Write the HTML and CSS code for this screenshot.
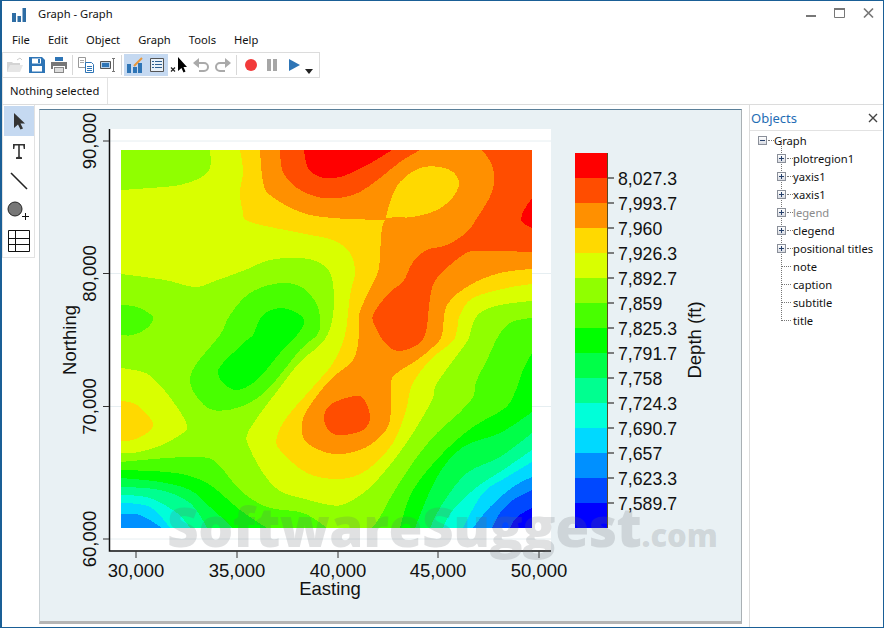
FILE: index.html
```html
<!DOCTYPE html>
<html lang="en">
<head>
<meta charset="utf-8">
<title>Graph - Graph</title>
<link rel="stylesheet" href="styles.css">
</head>
<body>
<div class="window">
  <header class="titlebar">
    <svg class="app-icon" width="14" height="14" viewBox="0 0 14 14"><path fill="#2e6da4" d="M0 5h4v9H0zM5.500 8h3.500v6H5.500zM10.500 0H14v14h-3.500z"/></svg>
    <span class="title-text">Graph - Graph</span>
    <div class="win-controls">
      <svg width="10" height="12" viewBox="0 0 10 12"><path fill="#777" d="M0 8h10v2H0z"/></svg>
      <svg width="11" height="12" viewBox="0 0 11 12"><path fill="none" stroke="#777" d="M.5 1.500h10v9H.500z"/><path fill="#777" d="M0 1h11v2H0z"/></svg>
      <svg width="11" height="12" viewBox="0 0 11 12"><path fill="none" stroke="#777" stroke-width="1.700" d="M1 1.500l9 9M10 1.500l-9 9"/></svg>
    </div>
  </header>
  <nav class="menubar">
    <span>File</span><span>Edit</span><span>Object</span><span>Graph</span><span>Tools</span><span>Help</span>
  </nav>
  <div class="toolbar">
    <span class="tb"><svg width="16" height="16" viewBox="0 0 16 16"><path fill="#d4d4d4" d="M0 5h5l1 1h7v9H0z"/><path fill="#e6e6e6" d="M3 8h13l-3 7H0z"/><path fill="none" stroke="#ccc" d="M10 3l3-2 2 2"/></svg></span>
    <span class="tb"><svg width="16" height="16" viewBox="0 0 16 16"><path fill="#2e75b6" d="M0 0h13l3 3v13H0z"/><path fill="#fff" d="M3 1.500h9v5H3zM3 9h10v5.500H3z"/><path fill="#2e75b6" d="M9 2h2v4H9z"/></svg></span>
    <span class="tb"><svg width="16" height="16" viewBox="0 0 16 16"><path fill="#2e75b6" d="M4 0h8v4H4z"/><path fill="#777" d="M0 5h16v7h-2V9H2v3H0z"/><path fill="#888" d="M3 10h10v6H3z"/><path fill="#ddd" d="M4 11h8v4H4z"/></svg></span>
    <i class="sep"></i>
    <span class="tb"><svg width="16" height="16" viewBox="0 0 16 16"><path fill="#fff" stroke="#999" d="M.5.500h7v10h-7z"/><path fill="#fff" stroke="#2e75b6" d="M7.500 5.500h6l2 2v8h-8z"/><path stroke="#2e75b6" d="M9 9.500h5M9 11.500h5M9 13.500h5"/><path stroke="#aaa" d="M2 3.500h4M2 5.500h4"/></svg></span>
    <span class="tb"><svg width="16" height="16" viewBox="0 0 16 16"><path fill="#b9d2ea" stroke="#555" d="M.5 4.500h10v7H.500z"/><path fill="#2e75b6" d="M2 6h7v4H2z"/><path fill="none" stroke="#777" d="M12 1.500h3M12 14.500h3M13.500 1.500v13"/></svg></span>
    <i class="sep"></i>
    <span class="tb active"><svg width="16" height="16" viewBox="0 0 16 16"><path fill="#2e75b6" d="M0 7h4v9H0zM6 10h4v6H6zM11 6h4v10h-4z"/><path stroke="#e8973a" stroke-width="2" d="M7 9l8-8"/></svg></span>
    <span class="tb active"><svg width="16" height="16" viewBox="0 0 16 16"><path fill="#e8f0f8" stroke="#555" d="M1.500 1.500h13v13h-13z"/><path stroke="#2e5f8f" d="M3 4.500h2M6 4.500h7M3 7.500h2M6 7.500h7M3 10.500h2M6 10.500h7"/></svg></span>
    <span class="tb cursor-cell"><svg width="22" height="18" viewBox="0 0 22 18"><path stroke="#222" stroke-width="1.200" d="M3 11.500l4 4M7 11.500l-4 4"/><path fill="#000" d="M10 1v14l3.500-3 2 4.500 2-1-2-4.500H19z"/></svg></span>
    <span class="tb"><svg width="16" height="16" viewBox="0 0 16 16"><path fill="none" stroke="#aaa" stroke-width="2" d="M3 6h8a4 4 0 0 1 0 8H6"/><path fill="#aaa" d="M0 6l6-5v10z"/></svg></span>
    <span class="tb"><svg width="16" height="16" viewBox="0 0 16 16"><path fill="none" stroke="#aaa" stroke-width="2" d="M13 6H5a4 4 0 0 0 0 8h5"/><path fill="#aaa" d="M16 6l-6-5v10z"/></svg></span>
    <i class="sep"></i>
    <span class="tb"><svg width="16" height="16" viewBox="0 0 16 16"><circle cx="9" cy="8" r="6" fill="#f23a3a"/></svg></span>
    <span class="tb"><svg width="16" height="16" viewBox="0 0 16 16"><path fill="#a6a6a6" d="M3 2h4v12H3zM9 2h4v12H9z"/></svg></span>
    <span class="tb"><svg width="16" height="16" viewBox="0 0 16 16"><path fill="#2e75b6" d="M3 2l11 6-11 6z"/></svg></span>
    <span class="tb-drop"><svg width="8" height="5" viewBox="0 0 8 5"><path fill="#222" d="M0 0h8L4 5z"/></svg></span>
  </div>
  <div class="statusrow"><span class="status-tab">Nothing selected</span></div>
  <main class="workspace">
    <aside class="palette">
      <span class="tool active"><svg width="14" height="18" viewBox="0 0 14 18"><path fill="#333" d="M2 1v15l4-3.500 2.500 5 2.500-1-2.500-5H13z"/></svg></span>
      <span class="tool"><svg width="16" height="16" viewBox="0 0 16 16"><path fill="#333" d="M2 1h12v5h-1.300l-.5-3.500H8.800v11.300l2.200.5V16H5v-1.700l2.200-.5V2.500H3.800L3.300 6H2z"/></svg></span>
      <span class="tool"><svg width="18" height="18" viewBox="0 0 18 18"><path stroke="#222" stroke-width="1.600" d="M1 1l16 16"/></svg></span>
      <span class="tool"><svg width="24" height="20" viewBox="0 0 24 20"><circle cx="8" cy="8" r="7" fill="#777" stroke="#222"/><path stroke="#111" d="M15 15.500h7M18.500 12v7"/></svg></span>
      <span class="tool"><svg width="24" height="24" viewBox="0 0 24 24"><path fill="none" stroke="#111" d="M1.500 1.500h21v21h-21zM8.500 1.500v21M1.500 9.500h21M1.500 15.500h21"/></svg></span>
    </aside>
    <section class="graph-panel">
      <svg id="chart" class="chart" width="702" height="512" viewBox="40 110 702 512">
        <defs><clipPath id="plotclip"><rect x="121" y="150" width="411" height="378"/></clipPath></defs>
        <rect class="plot-white" x="110" y="129" width="441" height="421"/>
        <path class="grid" d="M110 141h441M110 273.500h441M110 406.500h441M110 539h441"/>
        <rect x="121" y="150" width="411" height="378" fill="#90ff00"/>
        <g id="bands" clip-path="url(#plotclip)"></g>
        <path class="axis" d="M109.500 129v422H551"/>
        <path class="tick" d="M103 141h6M103 273.500h6M103 406.500h6M103 539h6M136 551v7M237 551v7M338 551v7M438 551v7M539 551v7"/>
        <g id="legend"></g>
        <g class="axis-text">
          <text x="136" y="577">30,000</text>
          <text x="237" y="577">35,000</text>
          <text x="338" y="577">40,000</text>
          <text x="438" y="577">45,000</text>
          <text x="539" y="577">50,000</text>
          <text x="330" y="595">Easting</text>
          <text transform="translate(96 141) rotate(-90)">90,000</text>
          <text transform="translate(96 273.500) rotate(-90)">80,000</text>
          <text transform="translate(96 406.500) rotate(-90)">70,000</text>
          <text transform="translate(96 539) rotate(-90)">60,000</text>
          <text transform="translate(76 340) rotate(-90)">Northing</text>
          <text transform="translate(701 340) rotate(-90)">Depth (ft)</text>
        </g>
      </svg>
      <div class="watermark">SoftwareSuggest<small>.com</small></div>
    </section>
    <aside class="objects">
      <div class="objects-head"><span>Objects</span><svg width="10" height="10" viewBox="0 0 10 10"><path fill="none" stroke="#444" stroke-width="1.400" d="M1 1l8 8M9 1l-8 8"/></svg></div>
      <div class="tree">
        <div class="node root"><i class="box minus"></i><i class="dash"></i><span>Graph</span></div>
        <div class="children">
          <div class="node"><i class="box plus"></i><i class="dash"></i><span>plotregion1</span></div>
          <div class="node"><i class="box plus"></i><i class="dash"></i><span>yaxis1</span></div>
          <div class="node"><i class="box plus"></i><i class="dash"></i><span>xaxis1</span></div>
          <div class="node muted"><i class="box plus"></i><i class="dash"></i><span>legend</span></div>
          <div class="node"><i class="box plus"></i><i class="dash"></i><span>clegend</span></div>
          <div class="node"><i class="box plus"></i><i class="dash"></i><span>positional titles</span></div>
          <div class="node leaf"><i class="dash long"></i><span>note</span></div>
          <div class="node leaf"><i class="dash long"></i><span>caption</span></div>
          <div class="node leaf"><i class="dash long"></i><span>subtitle</span></div>
          <div class="node leaf"><i class="dash long"></i><span>title</span></div>
        </div>
      </div>
    </aside>
  </main>
</div>
<script src="chart.js"></script>
</body>
</html>
```
FILE: styles.css
```css
* { box-sizing: border-box; }
html, body { margin: 0; padding: 0; background: #fff; }
body { font-family: "Noto Sans", "Open Sans", sans-serif; font-size: 11.200px; color: #111; }
.window { width: 884px; height: 628px; border: 1px solid #1a5f96; border-left-width: 2px; display: flex; flex-direction: column; overflow: hidden; background: #fff; }

.titlebar { height: 27px; flex: none; display: flex; align-items: center; padding-left: 10px; }
.app-icon { flex: none; }
.title-text { margin: -2px 0 0 12px; }
.win-controls { margin: -3px 0 0 auto; display: flex; align-items: center; gap: 18px; padding-right: 9px; }

.menubar { height: 24px; flex: none; display: flex; align-items: center; padding: 0 0 2px 10px; gap: 18px; }

.toolbar { height: 26px; width: 318px; flex: none; display: flex; align-items: center; border: 1px solid #dcdcdc; padding-left: 1px; }
.tb { width: 22px; height: 22px; flex: none; display: flex; align-items: center; justify-content: center; }
.tb.active { background: #c5d9f1; }
.cursor-cell { width: 22px; }
.sep { width: 1px; height: 20px; margin: 0 2px; background: #d8d8d8; flex: none; }
.tb-drop { width: 9px; height: 22px; display: flex; align-items: flex-end; padding-bottom: 2px; flex: none; }

.statusrow { height: 27px; flex: none; border-bottom: 1px solid #dcdcdc; }
.status-tab { display: inline-flex; align-items: center; height: 26px; width: 106px; padding: 0 0 2px 7px; border: solid #e2e2e2; border-width: 0 1px 0 1px; }

.workspace { flex: 1; display: flex; min-height: 0; }
.palette { width: 33px; height: 153px; flex: none; border: 1px solid #e2e2e2; border-top: 0; display: flex; flex-direction: column; padding: 1px 0 0 1px; }
.tool { width: 30px; height: 30px; flex: none; display: flex; align-items: center; justify-content: center; }
.tool.active { background: #c5d9f1; }

.graph-panel { position: relative; width: 703px; height: 515px; flex: none; margin: 4px 0 0 4px; border-top: 1px solid #5a7f99; border-left: 1px solid #c9d1d5; border-right: 1px solid #a9b0b4; border-bottom: 3px solid #b5b5b5; background: #e9f1f4; overflow: hidden; }
.chart { display: block; }
.plot-white { fill: #fff; }
.grid { stroke: #e6eef1; stroke-width: 1; fill: none; }
.axis { fill: none; stroke: #111; stroke-width: 1.500; }
.tick { fill: none; stroke: #333; stroke-width: 1; }
.band { shape-rendering: crispEdges; }
.legend-tick { stroke: #555; stroke-width: 1.500; }
.legend-edge { stroke: #5a4a20; stroke-width: 1; }
.axis-text text { font-family: "Liberation Sans", Arial, sans-serif; font-size: 18.500px; fill: #111; text-anchor: middle; }
.legend-label { font-family: "Liberation Sans", Arial, sans-serif; font-size: 17.700px; fill: #111; }
.watermark { position: absolute; left: 127px; top: 386px; font-family: "Open Sans", sans-serif; font-weight: 800; font-size: 55px; line-height: 60px; letter-spacing: -.5px; color: rgba(100, 105, 108, .2); white-space: nowrap; }
.watermark small { font-size: 31px; letter-spacing: 0; }

.objects { flex: 1; margin-left: 7px; border-left: 1px solid #dcdcdc; margin-right: 1px; }
.objects-head { height: 26px; display: flex; align-items: center; justify-content: space-between; padding: 1px 4px 0 1px; border-bottom: 1px solid #e2e2e2; color: #1f6db5; font-size: 13px; }
.tree { padding: 0 0 0 8px; position: relative; }
.node { height: 18px; display: flex; align-items: center; white-space: nowrap; }
.box { width: 9px; height: 9px; flex: none; border: 1px solid #8a8f99; background: linear-gradient(#fff, #d8dbe2); position: relative; }
.box::before { content: ""; position: absolute; left: 1px; right: 1px; top: 3px; height: 1px; background: #26406b; }
.box.plus::after { content: ""; position: absolute; top: 1px; bottom: 1px; left: 3px; width: 1px; background: #26406b; }
.dash { width: 6px; height: 0; flex: none; margin-left: 1px; border-top: 1px dotted #777; }
.dash.long { width: 9px; margin: 0 2px 0 5px; }
.root .dash { width: 6px; }
.children { margin-left: 19px; position: relative; }
.children::before { content: ""; position: absolute; left: 4px; top: -9px; bottom: 8px; border-left: 1px dotted #777; }
.muted { color: #8a8a8a; }
```
FILE: chart.js
```js
// Contour bands of the depth surface, drawn low layer first. "!" marks a sharp corner.
var P = {
  yg: '#d9ff00', ye: '#ffd900', or: '#ff9000', ro: '#ff4d00', re: '#ff0000',
  g1: '#48ff00', g2: '#00ff00', g3: '#00ff48', g4: '#00ff90', c1: '#00ffd9',
  c2: '#00d9ff', b1: '#0090ff', b2: '#0048ff', b3: '#0000ff'
};
var layers = [
  [P.yg, '121,190! 150,188 180,185 200,178 210,168 210,150! 532,150! 532,301! 500,305 480,313 472,326 468,340 452,362 436,385 432,400 413,433 390,465 367,490 345,504 330,505 305,499 280,491 263,473 249,447 247,435 257,418 278,390 300,362 322,343 331,325 334,300 331,275 320,263 300,258 270,260 245,270 215,281 195,287 165,280 121,274!'],
  [P.yg, '121,368! 143,372 155,380 172,400 187,425 180,435 157,447 133,453 121,453!'],
  [P.ye, '121,401! 137,405 153,423 147,433 133,440 121,441!'],
  [P.ye, '240,150! 243,172 240,192 243,212 250,222 300,233 333,240 350,253 355,272 350,295 345,335 333,363 313,387 287,417 277,437 280,450 307,473 340,479 367,470 393,443 406,410 412,385 430,360 452,342 457,330 460,315 473,298 507,288 532,284! 532,150!'],
  [P.or, '260,150! 263,182 270,195 300,212 333,218 385,220! 382,228 380,252 378,272 367,295 359,315 359,335 353,360 330,380 307,410 302,427 307,443 333,454 360,450 380,437 390,420 391,383 397,373 417,360 433,347 442,335 447,305 470,285 500,273 532,269! 532,150!'],
  [P.ye, '386,218! 390,202 400,182 420,168 440,167 453,172 459,183 453,197 437,210 413,217 397,217!'],
  [P.ro, '280,150! 283,172 297,188 317,197 340,198 360,192 380,178 400,162 420,150!'],
  [P.re, '304,150! 308,168 320,177 340,177 367,165 392,150!'],
  [P.ro, '482,150! 493,168 492,192 477,218 467,232 447,245 427,250 413,262 403,282 390,292 373,315 377,330 385,343 398,351 417,345 426,332 430,298 437,278 463,255 480,251 532,252! 532,150!'],
  [P.re, '532,198! 523,212 522,222 532,228!'],
  [P.ro, '324,418 330,405 350,397 363,398 370,417 363,430 343,435 330,432'],
  [P.g1, '121,305! 137,307 153,317 147,328 133,335 121,335!'],
  [P.g1, '220,335 230,315 250,293 280,283 303,288 317,305 320,322 317,335 300,350 267,390 240,407 213,410 197,397 190,380 197,363'],
  [P.g2, '253,335 263,315 282,308 300,315 304,323 297,335 280,353 257,380 237,390 223,383 218,373 223,363 247,340'],
  // lower-left bands
  [P.g1, '121,462! 167,458 200,457 217,463 240,490 267,507 303,513 327,528! 121,528!'],
  [P.g2, '121,470! 167,472 193,477 213,487 240,510 267,528! 121,528!'],
  [P.g3, '121,478! 160,482 190,490 210,507 233,528! 121,528!'],
  [P.g4, '121,487! 160,490 190,503 207,528! 121,528!'],
  [P.c1, '121,495! 150,498 177,513 190,528! 121,528!'],
  [P.c2, '121,503! 150,507 170,528! 121,528!'],
  [P.b1, '121,514! 140,515 162,528! 121,528!'],
  // lower-right bands
  [P.g1, '532,318! 512,322 499,335 487,360 476,382 473,397 458,414 437,433 417,457 395,490 380,517 372,528! 532,528!'],
  [P.g2, '532,353! 522,372 516,390 505,408 473,427 443,453 413,490 400,528! 532,528!'],
  [P.g3, '532,412! 500,433 463,447 437,477 415,528! 532,528!'],
  [P.g4, '532,433! 500,457 467,473 443,503 430,528! 532,528!'],
  [P.c1, '532,450! 503,470 477,487 453,510 443,528! 532,528!'],
  [P.c2, '532,462! 507,477 483,493 463,528! 532,528!'],
  [P.b1, '532,477! 513,487 490,507 473,528! 532,528!'],
  [P.b2, '532,490! 513,500 500,513 492,528! 532,528!'],
  [P.b3, '532,508! 517,517 510,528! 532,528!']
];
var NS = 'http://www.w3.org/2000/svg';
function smooth(str) {
  var pts = str.split(' ').map(function (s) {
    var sharp = s.slice(-1) === '!';
    var xy = s.replace('!', '').split(',');
    return { x: +xy[0], y: +xy[1], sharp: sharp };
  });
  var n = pts.length, d = 'M' + pts[0].x + ' ' + pts[0].y;
  function tan(i) {
    var p = pts[i];
    if (p.sharp) return { x: 0, y: 0 };
    var a = pts[(i - 1 + n) % n], b = pts[(i + 1) % n];
    return { x: (b.x - a.x) / 6, y: (b.y - a.y) / 6 };
  }
  for (var i = 0; i < n; i++) {
    var j = (i + 1) % n, t0 = tan(i), t1 = tan(j);
    d += 'C' + (pts[i].x + t0.x).toFixed(1) + ' ' + (pts[i].y + t0.y).toFixed(1) + ' ' +
      (pts[j].x - t1.x).toFixed(1) + ' ' + (pts[j].y - t1.y).toFixed(1) + ' ' + pts[j].x + ' ' + pts[j].y;
  }
  return d + 'Z';
}
function el(name, attrs, parent) {
  var e = document.createElementNS(NS, name);
  for (var k in attrs) e.setAttribute(k, attrs[k]);
  parent.appendChild(e);
  return e;
}
var bands = document.getElementById('bands');
layers.forEach(function (l) {
  el('path', { d: smooth(l[1]), fill: l[0], 'class': 'band' }, bands);
});
var legend = document.getElementById('legend');
var scale = ['#ff0000', '#ff4d00', '#ff9000', '#ffd900', '#d9ff00', '#90ff00', '#48ff00', '#00ff00', '#00ff48', '#00ff90', '#00ffd9', '#00d9ff', '#0090ff', '#0048ff', '#0000ff'];
var labels = ['8,027.3', '7,993.7', '7,960', '7,926.3', '7,892.7', '7,859', '7,825.3', '7,791.7', '7,758', '7,724.3', '7,690.7', '7,657', '7,623.3', '7,589.7'];
scale.forEach(function (c, i) {
  el('rect', { x: 575, y: 153 + i * 25, width: 32, height: 25, fill: c }, legend);
});
el('path', { d: 'M607.500 153v375', 'class': 'legend-edge' }, legend);
labels.forEach(function (t, i) {
  var y = 178 + i * 25;
  el('path', { d: 'M608 ' + y + 'h6', 'class': 'legend-tick' }, legend);
  var tx = el('text', { x: 618, y: y + 7, 'class': 'legend-label' }, legend);
  tx.textContent = t;
});
```
